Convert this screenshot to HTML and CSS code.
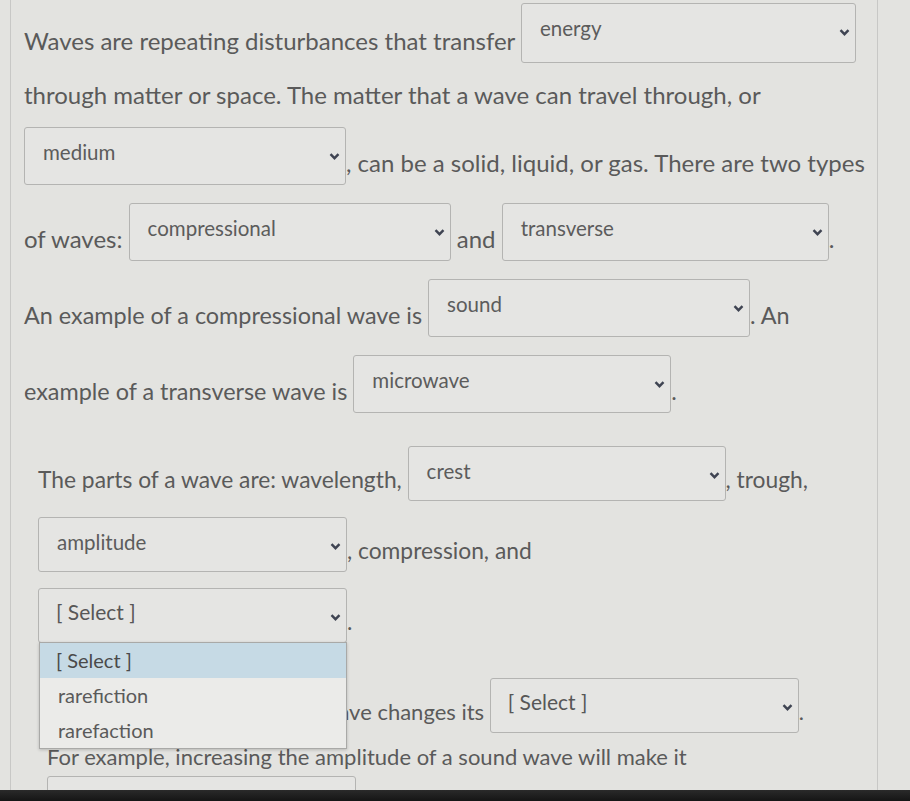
FILE: index.html
```html
<!DOCTYPE html>
<html lang="en">
<head>
<meta charset="utf-8">
<title>Waves quiz</title>
<link rel="stylesheet" href="styles.css">
</head>
<body>
<div class="screen">
  <div class="panel">
    <p class="para first">Waves are repeating disturbances that transfer <span class="dd w-xl"><span class="val">energy</span><svg class="chev" viewBox="0 0 10 7"><path d="M1 1.2 L5 5.2 L9 1.2"/></svg></span><br>through matter or space. The matter that a wave can travel through, or<br><span class="dd"><span class="val">medium</span><svg class="chev" viewBox="0 0 10 7"><path d="M1 1.2 L5 5.2 L9 1.2"/></svg></span>, can be a solid, liquid, or gas. There are two types<br>of waves: <span class="dd"><span class="val">compressional</span><svg class="chev" viewBox="0 0 10 7"><path d="M1 1.2 L5 5.2 L9 1.2"/></svg></span> and <span class="dd w-lg"><span class="val">transverse</span><svg class="chev" viewBox="0 0 10 7"><path d="M1 1.2 L5 5.2 L9 1.2"/></svg></span>.<br><span class="far">An example of a compressional wave is <span class="dd"><span class="val">sound</span><svg class="chev" viewBox="0 0 10 7"><path d="M1 1.2 L5 5.2 L9 1.2"/></svg></span>. An<br>example of a transverse wave is <span class="dd w-md"><span class="val">microwave</span><svg class="chev" viewBox="0 0 10 7"><path d="M1 1.2 L5 5.2 L9 1.2"/></svg></span>.</span></p>
    <p class="para mid">The parts of a wave are: wavelength, <span class="dd w-md"><span class="val">crest</span><svg class="chev" viewBox="0 0 10 7"><path d="M1 1.2 L5 5.2 L9 1.2"/></svg></span>, trough,<br><span class="dd w-sm"><span class="val">amplitude</span><svg class="chev" viewBox="0 0 10 7"><path d="M1 1.2 L5 5.2 L9 1.2"/></svg></span>, compression, and<br><span class="dd w-sm open"><span class="val ph">[ Select ]</span><svg class="chev" viewBox="0 0 10 7"><path d="M1 1.2 L5 5.2 L9 1.2"/></svg><span class="menu"><span class="opt sel">[ Select ]</span><span class="opt">rarefiction</span><span class="opt">rarefaction</span></span></span>.</p>
    <p class="para low">Changing the frequency of a wave changes its <span class="dd w-sm"><span class="val ph">[ Select ]</span><svg class="chev" viewBox="0 0 10 7"><path d="M1 1.2 L5 5.2 L9 1.2"/></svg></span>.</p>
    <p class="para low tight">For example, increasing the amplitude of a sound wave will make it<br><span class="dd w-sm flush"><span class="val ph">[ Select ]</span><svg class="chev" viewBox="0 0 10 7"><path d="M1 1.2 L5 5.2 L9 1.2"/></svg></span></p>
  </div>
</div>
<div class="bezel"></div>
</body>
</html>
```
FILE: styles.css
```css
html, body {
  margin: 0;
  padding: 0;
}
body {
  background: #e3e3e0;
  font-family: Lato, "Open Sans", sans-serif;
  color: #5a5a5a;
}
.screen {
  height: 790px;
  overflow: hidden;
}
.panel {
  margin-left: 10px;
  width: 868px;
  height: 820px;
  border-left: 1px solid #c8c8c6;
  border-right: 1px solid #c8c8c6;
  padding-left: 12px;
  box-sizing: border-box;
}
.para {
  margin: 16px 0 0;
  padding-left: 1px;
  font-size: 24px;
  line-height: 46px;
  white-space: nowrap;
}
.para.first {
  margin-top: -6px;
}
.far {
  font-size: 23.4px;
}
.para.mid {
  padding-left: 15px;
  font-size: 22.8px;
}
.para.low {
  padding-left: 21px;
  margin-top: 18px;
  font-size: 22px;
}
.para.tight {
  margin-top: -8px;
  padding-left: 24px;
}
.dd {
  position: relative;
  display: inline-block;
  box-sizing: border-box;
  width: 322px;
  height: 58px;
  margin: 9px 0;
  vertical-align: -22px;
  border: 1px solid #b4b4b2;
  border-radius: 3px;
  background: #e5e5e3;
  line-height: 24px;
}
.para.mid .dd,
.para.low .dd {
  height: 55px;
}
.para.mid .dd {
  margin: 8px 0;
  vertical-align: -21px;
}
.dd.flush { margin-top: -4px; }
.dd.w-xl { width: 335px; height: 60px; }
.dd.w-lg { width: 327px; }
.dd.w-md { width: 318px; }
.dd.w-sm { width: 309px; }
.val {
  position: absolute;
  left: 18px;
  top: 12px;
  font-size: 20.5px;
  color: #5c5c5c;
}
.val.ph {
  top: 11px;
  left: 17px;
  font-size: 21px;
  color: #575757;
}
.chev {
  position: absolute;
  right: 5px;
  top: 25px;
  width: 11px;
  height: 7px;
  fill: none;
  stroke: #3f4452;
  stroke-width: 2.4;
}
.menu {
  position: absolute;
  left: 0;
  top: 100%;
  width: 306px;
  border: 1px solid #a9a9a7;
  background: #ebebe9;
  box-shadow: 0 1px 3px rgba(0,0,0,0.2);
  z-index: 2;
  display: flex;
  flex-direction: column;
}
.opt {
  height: 35px;
  line-height: 35px;
  padding-left: 18px;
  font-size: 20px;
  color: #5a5a5a;
}
.opt.sel {
  background: #c6dae5;
  color: #4a4a4a;
  padding-left: 16px;
}
.bezel {
  height: 11px;
  background: linear-gradient(#2a2a2a, #151515);
}
```
